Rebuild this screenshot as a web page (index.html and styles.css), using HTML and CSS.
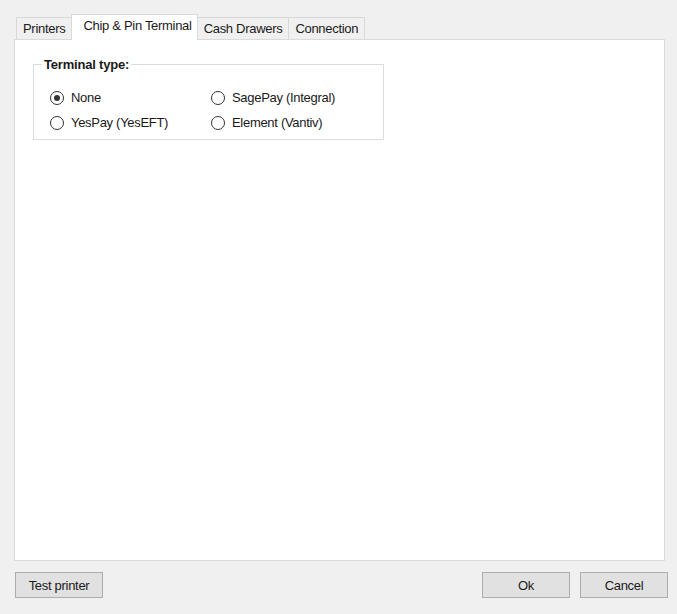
FILE: index.html
```html
<!DOCTYPE html>
<html lang="en">

<head>
  <meta charset="UTF-8">
  <meta name="viewport" content="width=device-width, initial-scale=1.0">
  <title>Hardware settings</title>
  <link rel="stylesheet" href="styles.css">
</head>

<body>
  <div class="window">
    <div class="tabs">
      <div class="tab">Printers</div>
      <div class="tab active">Chip &amp; Pin Terminal</div>
      <div class="tab">Cash Drawers</div>
      <div class="tab">Connection</div>
    </div>

    <div class="panel">
      <fieldset class="group">
        <legend>Terminal type:</legend>
        <div class="options">
          <label class="radio checked"><span class="dot"></span>None</label>
          <label class="radio"><span class="dot"></span>SagePay (Integral)</label>
          <label class="radio"><span class="dot"></span>YesPay (YesEFT)</label>
          <label class="radio"><span class="dot"></span>Element (Vantiv)</label>
        </div>
      </fieldset>
    </div>

    <div class="footer">
      <button class="btn test">Test printer</button>
      <div class="right">
        <button class="btn">Ok</button>
        <button class="btn">Cancel</button>
      </div>
    </div>
  </div>
</body>

</html>
```

FILE: styles.css
```css
html,
body {
  margin: 0;
  padding: 0;
}

body {
  width: 677px;
  height: 614px;
  background-color: #f0f0f0;
  font-family: "Liberation Sans", Arial, sans-serif;
  font-size: 13px;
  color: #1a1a1a;
  overflow: hidden;
}

.window {
  padding: 14px 12px 0 14px;
}

/* tab strip */
.tabs {
  display: flex;
  align-items: flex-end;
  height: 25px;
  padding-left: 2px;
}

.tab {
  height: 21px;
  line-height: 21px;
  padding: 0 6px;
  border: 1px solid #d9d9d9;
  border-bottom: none;
  border-right: none;
  background-color: #f0f0f0;
  letter-spacing: -0.3px;
}

.tab:last-child {
  border-right: 1px solid #d9d9d9;
}

.tab.active {
  position: relative;
  z-index: 1;
  height: 25px;
  line-height: 22px;
  margin-bottom: -1px;
  padding: 0 5px 0 11px;
  background-color: #fff;
  border-right: 1px solid #d9d9d9;
}

.tab.active + .tab {
  border-left: none;
}

/* content panel */
.panel {
  height: 520px;
  border: 1px solid #dadada;
  background-color: #fff;
}

.group {
  width: 349px;
  height: 68px;
  margin: 17px 0 0 18px;
  padding: 13px 0 0 0;
  border: 1px solid #dcdcdc;
}

.group legend {
  margin-left: 8px;
  padding: 0 2px;
  font-weight: bold;
  letter-spacing: -0.2px;
}

.options {
  display: grid;
  grid-template-columns: 161px 161px;
  grid-auto-rows: 25px;
  padding-left: 16px;
}

.radio {
  display: flex;
  align-items: center;
  letter-spacing: -0.3px;
}

.dot {
  width: 12px;
  height: 12px;
  margin-right: 7px;
  border: 1px solid #333;
  border-radius: 50%;
  background-color: #fff;
  position: relative;
}

.radio.checked .dot::after {
  content: "";
  position: absolute;
  left: 3px;
  top: 3px;
  width: 6px;
  height: 6px;
  border-radius: 50%;
  background-color: #333;
}

/* bottom buttons */
.footer {
  display: flex;
  justify-content: space-between;
  margin: 11px -3px 0 0;
  padding-left: 1px;
}

.right {
  display: flex;
  gap: 10px;
}

.btn {
  width: 88px;
  height: 26px;
  padding: 0;
  border: 1px solid #adadad;
  background-color: #e1e1e1;
  font-family: inherit;
  font-size: 13px;
  color: #1a1a1a;
  letter-spacing: -0.3px;
}
```
